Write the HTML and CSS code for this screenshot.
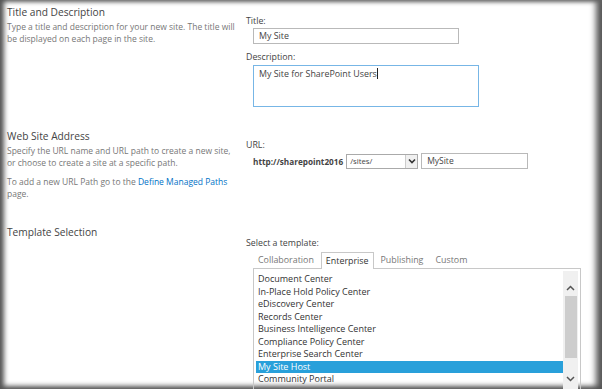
FILE: index.html
```html
<!DOCTYPE html>
<html lang="en">
<head>
    <meta charset="UTF-8">
    <title>New SharePoint Site</title>
    <link rel="stylesheet" href="styles.css">
</head>
<body>
    <div id="frame">
        <div class="section section-title">
            <div class="info">
                <h3>Title and Description</h3>
                <p>Type a title and description for your new site. The title will be displayed on each page in the site.</p>
            </div>
            <div class="fields">
                <div class="label">Title:</div>
                <div class="field">
                    <div class="textbox title-box">My Site</div>
                </div>
                <div class="label">Description:</div>
                <div class="field">
                    <div class="textarea">My Site for SharePoint Users<span class="caret"></span></div>
                </div>
            </div>
        </div>

        <div class="section section-url">
            <div class="info">
                <h3>Web Site Address</h3>
                <p>Specify the URL name and URL path to create a new site, or choose to create a site at a specific path.</p>
                <p>To add a new URL Path go to the <a href="#">Define Managed Paths</a> page.</p>
            </div>
            <div class="fields">
                <div class="label">URL:</div>
                <div class="field url-row">
                    <span class="host">http://sharepoint2016</span>
                    <div class="select">
                        <span>/sites/</span>
                        <span class="select-btn">
                            <svg width="8" height="6" viewBox="0 0 8 6"><path d="M1 1.5 L4 4.5 L7 1.5" fill="none" stroke="#333" stroke-width="1.6"/></svg>
                        </span>
                    </div>
                    <div class="textbox url-box">MySite</div>
                </div>
            </div>
        </div>

        <div class="section section-template">
            <div class="info">
                <h3>Template Selection</h3>
            </div>
            <div class="fields">
                <div class="label">Select a template:</div>
                <div class="field">
                    <div class="tabs">
                        <span class="tab">Collaboration</span>
                        <span class="tab active">Enterprise</span>
                        <span class="tab">Publishing</span>
                        <span class="tab">Custom</span>
                    </div>
                    <div class="listbox">
                        <ul class="items">
                            <li>Document Center</li>
                            <li>In-Place Hold Policy Center</li>
                            <li>eDiscovery Center</li>
                            <li>Records Center</li>
                            <li>Business Intelligence Center</li>
                            <li>Compliance Policy Center</li>
                            <li>Enterprise Search Center</li>
                            <li class="selected">My Site Host</li>
                            <li>Community Portal</li>
                        </ul>
                        <div class="scrollbar">
                            <svg class="arrow arrow-up" width="9" height="6" viewBox="0 0 9 6"><path d="M1 5 L4.5 1.5 L8 5" fill="none" stroke="#555" stroke-width="1.5"/></svg>
                            <div class="thumb"></div>
                            <svg class="arrow arrow-down" width="9" height="6" viewBox="0 0 9 6"><path d="M1 1 L4.5 4.5 L8 1" fill="none" stroke="#555" stroke-width="1.5"/></svg>
                        </div>
                    </div>
                </div>
            </div>
        </div>
    </div>
</body>
</html>
```

FILE: styles.css
```css
* {
    margin: 0;
    padding: 0;
    box-sizing: border-box;
}

body {
    font-family: 'Open Sans', 'Noto Sans', sans-serif;
    background: white;
    color: #444;
}

#frame {
    position: relative;
    width: 602px;
    height: 389px;
    overflow: hidden;
    background: white;
    box-shadow:
        inset 7px 0 5px -3px #555,
        inset 0 4px 4px -2px #666,
        inset -10px 0 6px -4px #555,
        inset 0 -6px 5px -3px #555;
}

.section {
    display: flex;
}

.section-title {
    padding-top: 5px;
    height: 129px;
}

.section-url {
    height: 96px;
}

.info {
    width: 246px;
    padding-left: 7px;
}

.info h3 {
    font-size: 10.2px;
    font-weight: normal;
    color: #444;
    line-height: 14px;
    margin-bottom: 2px;
}

.info p {
    font-size: 8.5px;
    line-height: 12px;
    color: #777;
    max-width: 229px;
    margin-bottom: 7px;
}

.info a {
    color: #0072c6;
    text-decoration: none;
}

.fields {
    flex: 1;
    padding-top: 9px;
}

.label {
    font-size: 8.8px;
    line-height: 14px;
    color: #444;
}

.section-template .label {
    margin-top: 2px;
}

.field {
    padding-left: 7px;
}

.textbox {
    height: 16px;
    border: 1px solid #b9b9b9;
    font-size: 8.9px;
    line-height: 14px;
    padding-left: 5px;
    color: #444;
    background: white;
}

.title-box {
    width: 206px;
    margin-bottom: 6px;
}

.textarea {
    width: 226px;
    height: 42px;
    margin-top: 1px;
    border: 1px solid #77b6e6;
    font-size: 8.9px;
    line-height: 14px;
    padding: 1px 5px;
    color: #444;
}

.caret {
    display: inline-block;
    width: 1px;
    height: 11px;
    background: #222;
    vertical-align: -2px;
}

.url-row {
    display: flex;
    align-items: center;
    margin-top: 1px;
}

.host {
    font-size: 8.2px;
    font-weight: bold;
    color: #444;
    margin-right: 3px;
}

.select {
    display: flex;
    align-items: center;
    justify-content: space-between;
    width: 72px;
    height: 15px;
    border: 1px solid #aaa;
    font-size: 7.8px;
    color: #444;
    padding-left: 3px;
    margin-right: 3px;
}

.select-btn {
    display: flex;
    align-items: center;
    justify-content: center;
    width: 12px;
    height: 13px;
    border-left: 1px solid #ccc;
    background: #f0f0f0;
}

.url-box {
    width: 107px;
    height: 16px;
    font-size: 8.5px;
}

.tabs {
    display: flex;
    align-items: flex-end;
    height: 17px;
    margin-top: 1px;
}

.tab {
    font-size: 8.9px;
    line-height: 16px;
    color: #777;
    padding: 0 4px;
    margin-right: 2px;
    border: 1px solid transparent;
    border-bottom: none;
}

.tab.active {
    color: #333;
    border-color: #c8c8c8;
    background: white;
    position: relative;
    top: 1px;
}

.listbox {
    display: flex;
    width: 328px;
    height: 130px;
    border: 1px solid #c8c8c8;
}

.items {
    list-style: none;
    flex: 1;
    padding: 4px 0 0 2px;
}

.items li {
    font-size: 9px;
    line-height: 12.5px;
    height: 12.5px;
    color: #333;
    padding-left: 2px;
}

.items li.selected {
    background: #29a0da;
    color: white;
}

.scrollbar {
    width: 15px;
    margin: 2px 2px 0 0;
    background: #f0f0f0;
    display: flex;
    flex-direction: column;
    align-items: center;
}

.arrow-up {
    margin: 14px 0 5px;
}

.arrow-down {
    margin-top: 18px;
}

.thumb {
    width: 12px;
    height: 62px;
    background: #cdcdcd;
}
```
